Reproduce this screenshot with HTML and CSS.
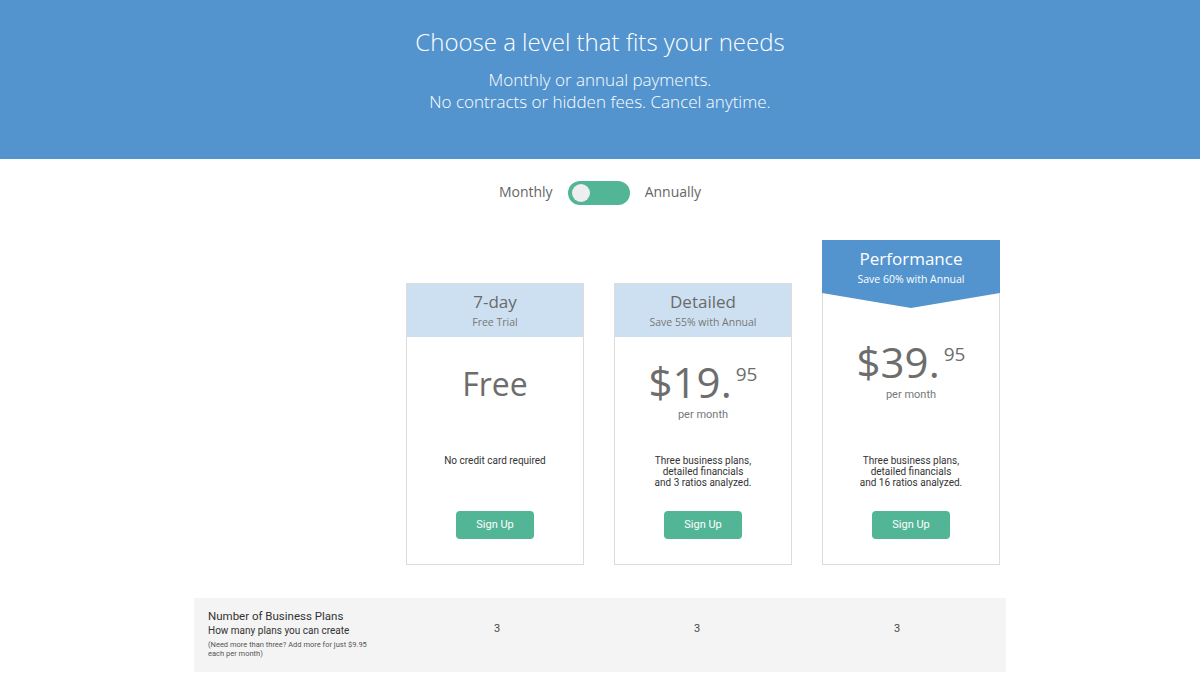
FILE: index.html
```html
<!DOCTYPE html>
<html lang="en">
<head>
    <meta charset="UTF-8">
    <meta name="viewport" content="width=device-width, initial-scale=1.0">
    <title>Pricing</title>
    <link rel="stylesheet" href="styles.css">
</head>
<body>
    <!-- 顶部横幅 -->
    <div class="hero">
        <h1>Choose a level that fits your needs</h1>
        <p>Monthly or annual payments.<br>No contracts or hidden fees. Cancel anytime.</p>
    </div>

    <!-- 月付 / 年付切换 -->
    <div class="billing">
        <span>Monthly</span>
        <div class="switch"><div class="knob"></div></div>
        <span>Annually</span>
    </div>

    <div class="wrap">
        <div class="plans">
            <div class="plan">
                <div class="plan-head">
                    <div class="plan-name">7-day</div>
                    <div class="plan-note">Free Trial</div>
                </div>
                <div class="plan-body">
                    <div class="price free">Free</div>
                    <div class="desc">No credit card required</div>
                    <a class="btn" href="#">Sign Up</a>
                </div>
            </div>
            <div class="plan">
                <div class="plan-head">
                    <div class="plan-name">Detailed</div>
                    <div class="plan-note">Save 55% with Annual</div>
                </div>
                <div class="plan-body">
                    <div class="price">$19.<sup>95</sup></div>
                    <div class="per">per month</div>
                    <div class="desc">Three business plans,<br>detailed financials<br>and 3 ratios analyzed.</div>
                    <a class="btn" href="#">Sign Up</a>
                </div>
            </div>
            <div class="plan featured">
                <div class="plan-head">
                    <div class="plan-name">Performance</div>
                    <div class="plan-note">Save 60% with Annual</div>
                </div>
                <div class="plan-body">
                    <div class="price">$39.<sup>95</sup></div>
                    <div class="per">per month</div>
                    <div class="desc">Three business plans,<br>detailed financials<br>and 16 ratios analyzed.</div>
                    <a class="btn" href="#">Sign Up</a>
                </div>
            </div>
        </div>

        <!-- 功能对比 -->
        <div class="row">
            <div class="row-label">
                <div class="row-title">Number of Business Plans</div>
                <div class="row-sub">How many plans you can create</div>
                <div class="row-small">(Need more than three? Add more for just $9.95 each per month)</div>
            </div>
            <div class="row-val">3</div>
            <div class="row-val">3</div>
            <div class="row-val">3</div>
        </div>
    </div>
</body>
</html>
```

FILE: styles.css
```css
/* 全局样式 */
html, body {
    margin: 0;
    padding: 0;
    background: #fff;
    font-family: "Open Sans", sans-serif;
    color: #666;
}

/* 顶部横幅 */
.hero {
    height: 159px;
    box-sizing: border-box;
    padding-top: 26px;
    background-color: #5394ce;
    color: #fff;
    text-align: center;
}

.hero h1 {
    margin: 0;
    font-size: 24px;
    font-weight: 300;
    line-height: 32px;
}

.hero p {
    margin: 11px 0 0;
    font-size: 17px;
    font-weight: 300;
    line-height: 22px;
}

/* 切换按钮 */
.billing {
    display: flex;
    justify-content: center;
    align-items: center;
    gap: 15px;
    padding-top: 22px;
    font-size: 14px;
    color: #666;
}

.billing span {
    margin-bottom: 3px;
}

.switch {
    width: 62px;
    height: 24px;
    border-radius: 12px;
    background-color: #52b596;
    display: flex;
    align-items: center;
    padding-left: 4px;
    box-sizing: border-box;
}

.knob {
    width: 18px;
    height: 18px;
    border-radius: 50%;
    background-color: #eeeef0;
}

.wrap {
    width: 812px;
    margin: 0 auto;
}

/* 价格卡片 */
.plans {
    display: flex;
    align-items: flex-end;
    gap: 30px;
    padding-left: 212px;
    margin-top: 35px;
}

.plan {
    width: 178px;
    border: 1px solid #dcdcdc;
    box-sizing: border-box;
    background: #fff;
    text-align: center;
}

.plan-head {
    height: 53px;
    background-color: #cde0f1;
    padding-top: 7px;
    box-sizing: border-box;
}

.plan-name {
    font-size: 17px;
    line-height: 22px;
    color: #6a6a6a;
}

.plan-note {
    margin-top: 2px;
    font-size: 10.5px;
    line-height: 14px;
    color: #777;
}

.featured .plan-head {
    height: 68px;
    margin: -1px -1px 0;
    padding-top: 8px;
    background-color: #5394ce;
    clip-path: polygon(0 0, 100% 0, 100% 53px, 50% 100%, 0 53px);
}

.featured .plan-name,
.featured .plan-note {
    color: #fff;
}

.plan-body {
    display: flex;
    flex-direction: column;
    align-items: center;
    height: 227px;
    box-sizing: border-box;
    padding: 19px 0 25px;
}

.featured .plan-body {
    height: 256px;
    padding-top: 28px;
}

.price {
    font-size: 42px;
    line-height: 52px;
    color: #6d6d6d;
}

.price sup {
    font-size: 19px;
    line-height: 1;
    vertical-align: top;
    position: relative;
    top: 9px;
    margin-left: 4px;
}

.price.free {
    font-size: 32px;
    padding-top: 2px;
}

.per {
    font-family: Roboto, sans-serif;
    font-size: 11px;
    line-height: 14px;
    color: #777;
}

.desc {
    margin-top: auto;
    height: 56px;
    font-family: Roboto, sans-serif;
    font-size: 10px;
    line-height: 11px;
    color: #333;
}

.btn {
    display: block;
    width: 78px;
    height: 28px;
    line-height: 28px;
    border-radius: 4px;
    background-color: #52b596;
    color: #fff;
    font-family: Roboto, sans-serif;
    font-size: 11px;
    text-decoration: none;
}

/* 对比表格行 */
.row {
    display: grid;
    grid-template-columns: 203px 200px 200px 200px;
    height: 74px;
    margin-top: 33px;
    background-color: #f4f4f4;
    font-family: Roboto, sans-serif;
    color: #333;
}

.row-label {
    padding: 11px 0 0 14px;
}

.row-title {
    font-size: 11.5px;
    line-height: 14px;
}

.row-sub {
    font-size: 10px;
    line-height: 15px;
}

.row-small {
    max-width: 170px;
    font-size: 7.5px;
    line-height: 9px;
    color: #555;
    margin-top: 2px;
}

.row-val {
    display: flex;
    justify-content: center;
    align-items: center;
    font-size: 11px;
    color: #444;
    padding-bottom: 13px;
}
```
